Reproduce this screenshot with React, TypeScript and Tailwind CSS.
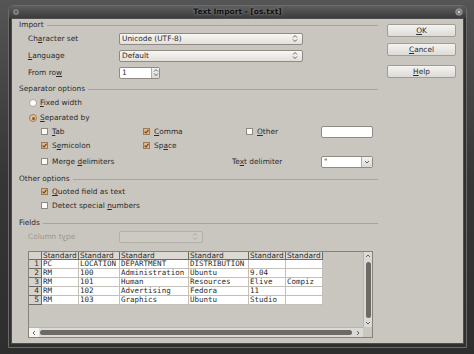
import React from "react";

// ─── Small widgets ─────────────────────────────────────────────────────────

function Mn({ t, i }: { t: string; i: number }) {
  return (
    <>
      {t.slice(0, i)}
      <span className="underline underline-offset-[1px]">{t[i]}</span>
      {t.slice(i + 1)}
    </>
  );
}

function UpDown({ color = "#555" }: { color?: string }) {
  return (
    <svg width="6" height="9" viewBox="0 0 6 9">
      <path d="M1 3.5 L3 1.5 L5 3.5 M1 5.5 L3 7.5 L5 5.5" stroke={color} strokeWidth="0.9" fill="none" />
    </svg>
  );
}

function Check({ on }: { on?: boolean }) {
  return (
    <span
      className={`w-[7px] h-[7px] shrink-0 border flex items-center justify-center ${
        on ? "border-[#9c7b56] bg-[#dbb68c]" : "border-[#8d8a84] bg-[#fbfbfa]"
      }`}
    >
      {on && (
        <svg width="5" height="5" viewBox="0 0 5 5">
          <path d="M0.6 2.6 L2 4 L4.5 0.8" stroke="#6b3f12" strokeWidth="1.1" fill="none" />
        </svg>
      )}
    </span>
  );
}

function Radio({ on }: { on?: boolean }) {
  return (
    <span
      className={`w-[8px] h-[8px] shrink-0 rounded-full border flex items-center justify-center ${
        on ? "border-[#a47a4e] bg-[#e2c39e]" : "border-[#aaa7a1] bg-white"
      }`}
    >
      {on && <span className="w-[3px] h-[3px] rounded-full bg-[#8a5a28]" />}
    </span>
  );
}

function Group({ label, mt }: { label: string; mt: string }) {
  return (
    <div className={`${mt} h-[12px] flex items-center pl-[7px]`}>
      <span>{label}</span>
      <div className="flex-1 ml-[3px] h-px bg-[#a8a49d]" />
    </div>
  );
}

function Combo({ w, text, disabled }: { w: string; text?: string; disabled?: boolean }) {
  return (
    <div
      className={`${w} h-[12px] flex items-center justify-between rounded-[2px] border pl-[2px] pr-[4px] ${
        disabled
          ? "border-[#b3b0a9] bg-[#cdcac4]"
          : "border-[#8f8b84] bg-gradient-to-b from-[#f8f7f5] to-[#e2e0db]"
      }`}
    >
      <span>{text}</span>
      <UpDown color={disabled ? "#a8a59f" : "#555"} />
    </div>
  );
}

function Chk({ on, w, children }: { on?: boolean; w: string; children: React.ReactNode }) {
  return (
    <div className={`${w} flex items-center gap-[4px] shrink-0`}>
      <Check on={on} />
      <span>{children}</span>
    </div>
  );
}

function Btn({ mt, children }: { mt: string; children: React.ReactNode }) {
  return (
    <div
      className={`${mt} h-[13px] flex items-center justify-center rounded-[2px] border border-[#a19d96] bg-gradient-to-b from-[#f4f3f1] to-[#dddbd6]`}
    >
      {children}
    </div>
  );
}

// ─── Table data ────────────────────────────────────────────────────────────

const colW = ["w-[37px]", "w-[41px]", "w-[69px]", "w-[60px]", "w-[37px]", "w-[37px]"];

const rows = [
  ["PC", "LOCATION", "DEPARTMENT", "DISTRIBUTION", "", ""],
  ["RM", "100", "Administration", "Ubuntu", "9.04", ""],
  ["RM", "101", "Human", "Resources", "Elive", "Compiz"],
  ["RM", "102", "Advertising", "Fedora", "11", ""],
  ["RM", "103", "Graphics", "Ubuntu", "Studio", ""],
];

function Preview() {
  return (
    <div className="mt-[8px] ml-[16px] w-[345px] h-[87px] border border-[#85827b] flex flex-col">
      <div className="h-[75px] flex">
        {/* grid */}
        <div className="w-[334px] h-full flex flex-col">
          <div className="h-[8px] flex">
            <div className="w-[13px] h-full bg-[#d6d3cd] border-r border-b border-[#6d6a64]" />
            {colW.map((w, i) => (
              <div
                key={i}
                className={`${w} h-full bg-[#dcd9d3] border-r border-b border-[#6d6a64] pl-[1px] leading-[7px] overflow-hidden whitespace-nowrap`}
              >
                Standard
              </div>
            ))}
          </div>
          {rows.map((r, ri) => (
            <div key={ri} className="h-[9px] flex">
              <div className="w-[13px] h-full bg-[#d6d3cd] border-r border-b border-[#6d6a64] text-right pr-[2px] leading-[8px]">
                {ri + 1}
              </div>
              {r.map((c, ci) => (
                <div
                  key={ci}
                  className={`${colW[ci]} h-full bg-white border-r border-b border-[#c3c0ba] pl-[1px] leading-[8px] overflow-hidden whitespace-nowrap font-['DejaVu_Sans_Mono',monospace] text-[7.5px]`}
                >
                  {c}
                </div>
              ))}
            </div>
          ))}
        </div>
        {/* vertical scrollbar */}
        <div className="w-[9px] h-full bg-[#dcdad6] border-l border-[#b8b5af] flex flex-col items-center">
          <svg width="6" height="8" viewBox="0 0 6 8">
            <path d="M1 5 L3 3 L5 5" stroke="#555" strokeWidth="0.9" fill="none" />
          </svg>
          <div className="mt-[2px] w-[5px] h-[56px] rounded-full bg-[#6c6a65]" />
          <div className="flex-1" />
          <svg width="6" height="8" viewBox="0 0 6 8">
            <path d="M1 3 L3 5 L5 3" stroke="#555" strokeWidth="0.9" fill="none" />
          </svg>
        </div>
      </div>
      <div className="h-[10px] flex">
        <div className="w-[334px] h-full flex items-center bg-[#dcdad6] border-t border-[#b8b5af]">
          <div className="w-[10px] h-full bg-[#f6f5f3] flex items-center justify-center">
            <svg width="6" height="6" viewBox="0 0 6 6">
              <path d="M4 1 L2 3 L4 5" stroke="#555" strokeWidth="0.9" fill="none" />
            </svg>
          </div>
          <div className="ml-[1px] w-[312px] h-[5px] rounded-full bg-[#6c6a65]" />
          <div className="flex-1 flex items-center justify-center">
            <svg width="6" height="6" viewBox="0 0 6 6">
              <path d="M2 1 L4 3 L2 5" stroke="#555" strokeWidth="0.9" fill="none" />
            </svg>
          </div>
        </div>
        <div className="w-[9px] h-full bg-[#c9c6bf]" />
      </div>
    </div>
  );
}

// ─── Page ──────────────────────────────────────────────────────────────────

export default function App() {
  return (
    <div className="w-[474px] h-[354px] overflow-hidden bg-[#393939] bg-gradient-to-b from-[#555555] via-[#363636] to-[#2e2e2e] pt-[5px] pl-[8px] font-['DejaVu_Sans',sans-serif] text-[7.4px] text-[#2b2b2b]">
      <div className="w-[459px] h-[343px] border border-[#6b6b6b] rounded-t-[5px] bg-[#303030] flex flex-col">
        {/* title bar */}
        <div className="h-[12px] flex items-center px-[3px] rounded-t-[4px] bg-gradient-to-b from-[#5e5e5e] to-[#3b3b3b]">
          <svg width="8" height="8" viewBox="0 0 8 8">
            <circle cx="4" cy="4" r="3.2" fill="#8a8a8a" stroke="#444" strokeWidth="0.6" />
            <circle cx="4" cy="4" r="1.2" fill="#555" />
          </svg>
          <div className="flex-1 text-center font-bold text-[7.5px] text-[#111111] [text-shadow:0_0_3px_#9a9a9a]">
            Text Import - [os.txt]
          </div>
          <svg width="8" height="8" viewBox="0 0 8 8">
            <circle cx="4" cy="4" r="3.3" fill="#7a7a7a" stroke="#b5b5b5" strokeWidth="0.6" />
            <path d="M2.7 2.7 L5.3 5.3 M5.3 2.7 L2.7 5.3" stroke="#e8e8e8" strokeWidth="0.8" />
          </svg>
        </div>

        {/* dialog body */}
        <div className="flex-1 mx-[2px] mb-[3px] border border-[#4e4e4e] bg-[#c9c6bf] flex pr-[7px]">
          <div className="w-[366px] flex flex-col">
            <Group label="Import" mt="mt-0" />
            <div className="mt-[1px] h-[13px] flex items-center pl-[16px]">
              <span className="w-[91px]"><Mn t="Character set" i={2} /></span>
              <Combo w="w-[184px]" text="Unicode (UTF-8)" />
            </div>
            <div className="mt-[4px] h-[13px] flex items-center pl-[16px]">
              <span className="w-[91px]"><Mn t="Language" i={0} /></span>
              <Combo w="w-[184px]" text="Default" />
            </div>
            <div className="mt-[4px] h-[13px] flex items-center pl-[16px]">
              <span className="w-[91px]"><Mn t="From row" i={7} /></span>
              <div className="w-[41px] h-[12px] flex border border-[#8f8b84] rounded-[2px] bg-white">
                <span className="flex-1 pl-[2px] leading-[10px]">1</span>
                <div className="w-[8px] h-full border-l border-[#b0ada6] bg-gradient-to-b from-[#f3f2f0] to-[#dcdad5] flex items-center justify-center">
                  <UpDown />
                </div>
              </div>
            </div>

            <Group label="Separator options" mt="mt-[4px]" />
            <div className="mt-[2px] h-[12px] flex items-center gap-[3px] pl-[17px]">
              <Radio />
              <span><Mn t="Fixed width" i={0} /></span>
            </div>
            <div className="mt-[3px] h-[12px] flex items-center gap-[3px] pl-[17px]">
              <Radio on />
              <span><Mn t="Separated by" i={0} /></span>
            </div>
            <div className="mt-[1px] h-[13px] flex items-center pl-[29px]">
              <Chk w="w-[102px]"><Mn t="Tab" i={0} /></Chk>
              <Chk on w="w-[103px]"><Mn t="Comma" i={0} /></Chk>
              <Chk w="w-[75px]"><Mn t="Other" i={0} /></Chk>
              <div className="w-[52px] h-[12px] border border-[#8f8b84] rounded-[2px] bg-white" />
            </div>
            <div className="mt-[2px] h-[12px] flex items-center pl-[29px]">
              <Chk on w="w-[102px]"><Mn t="Semicolon" i={1} /></Chk>
              <Chk on w="w-[103px]"><Mn t="Space" i={2} /></Chk>
            </div>
            <div className="mt-[3px] h-[13px] flex items-center pl-[29px]">
              <Chk w="w-[191px]"><Mn t="Merge delimiters" i={6} /></Chk>
              <span className="w-[89px]"><Mn t="Text delimiter" i={2} /></span>
              <div className="w-[52px] h-[12px] flex border border-[#8f8b84] rounded-[2px] bg-white">
                <span className="flex-1 pl-[2px] leading-[10px]">"</span>
                <div className="w-[11px] h-full border-l border-[#b0ada6] bg-gradient-to-b from-[#f3f2f0] to-[#dcdad5] flex items-center justify-center">
                  <svg width="6" height="6" viewBox="0 0 6 6">
                    <path d="M1 2 L3 4 L5 2" stroke="#555" strokeWidth="0.9" fill="none" />
                  </svg>
                </div>
              </div>
            </div>

            <Group label="Other options" mt="mt-[5px]" />
            <div className="mt-[1px] h-[12px] flex items-center pl-[29px]">
              <Chk on w="w-[200px]"><Mn t="Quoted field as text" i={0} /></Chk>
            </div>
            <div className="mt-[2px] h-[12px] flex items-center pl-[29px]">
              <Chk w="w-[200px]"><Mn t="Detect special numbers" i={15} /></Chk>
            </div>

            <Group label="Fields" mt="mt-[5px]" />
            <div className="mt-[1px] h-[13px] flex items-center pl-[16px] text-[#9b978f]">
              <span className="w-[91px]"><Mn t="Column type" i={8} /></span>
              <Combo w="w-[84px]" disabled />
            </div>
            <Preview />
          </div>

          {/* buttons */}
          <div className="ml-[9px] w-[69px] flex flex-col">
            <Btn mt="mt-[5px]"><Mn t="OK" i={0} /></Btn>
            <Btn mt="mt-[6px]"><Mn t="Cancel" i={0} /></Btn>
            <Btn mt="mt-[9px]"><Mn t="Help" i={0} /></Btn>
          </div>
        </div>
      </div>
    </div>
  );
}
